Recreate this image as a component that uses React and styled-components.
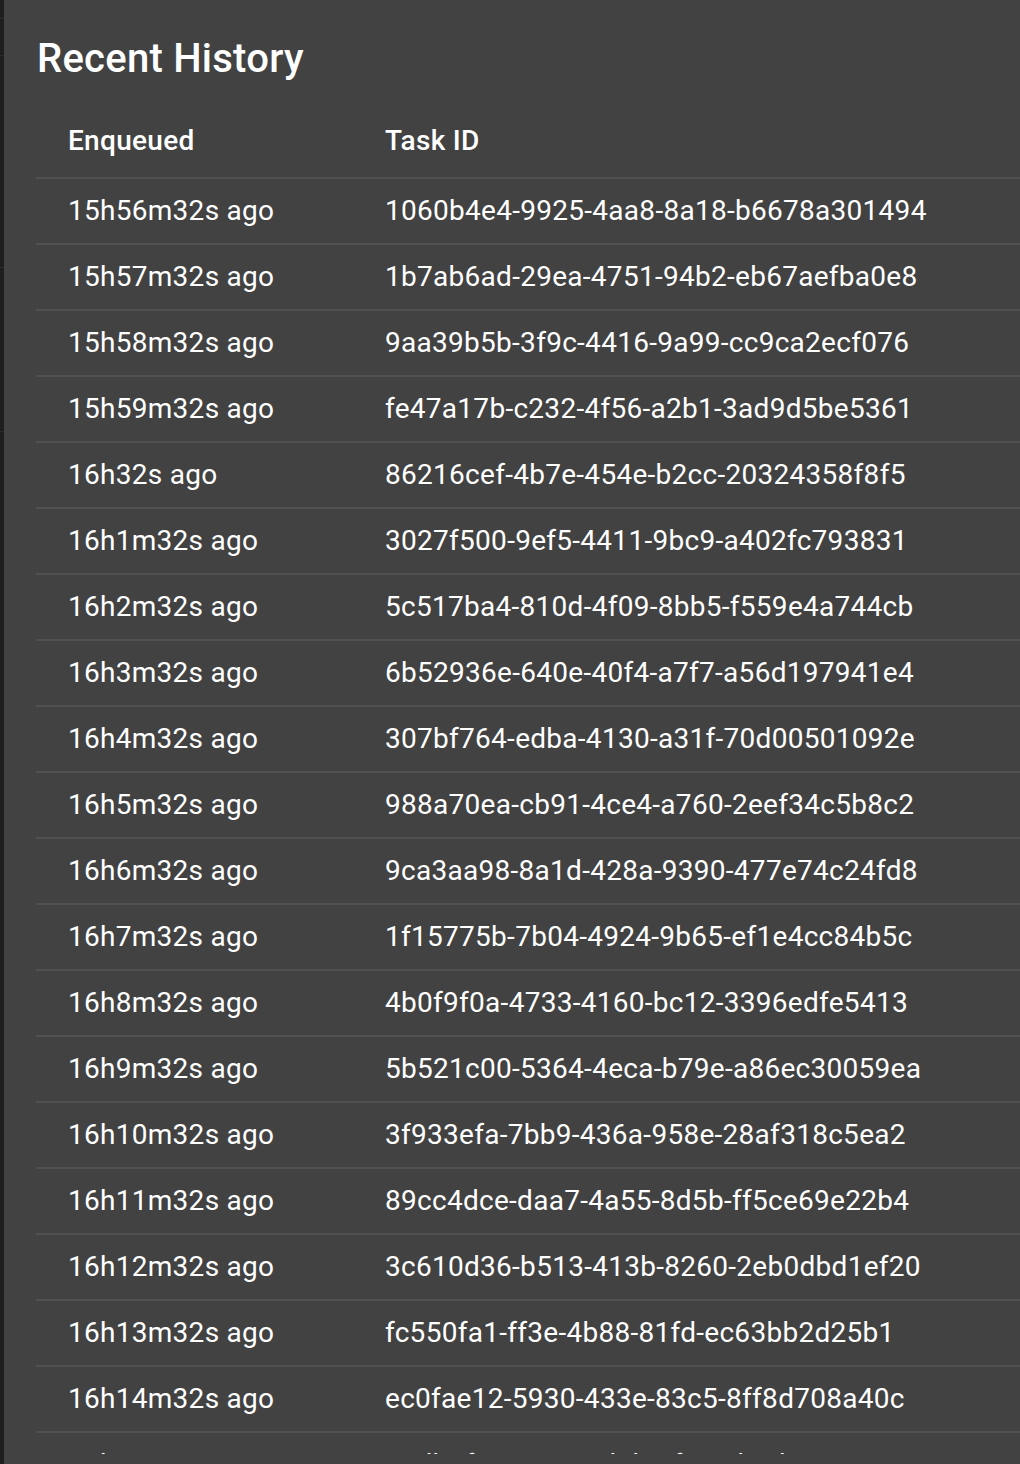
import React from 'react'
import styled, { createGlobalStyle } from 'styled-components'

const GlobalStyle = createGlobalStyle`
  html, body {
    margin: 0;
    padding: 0;
    height: 100%;
    overflow: hidden;
    background-color: #424242;
  }
  * {
    box-sizing: border-box;
  }
`

const Page = styled.div`
  display: flex;
  width: 1020px;
  height: 1464px;
  overflow: hidden;
  font-family: Roboto, 'Noto Sans', sans-serif;
  color: #ffffff;
`

const Rail = styled.div`
  flex: 0 0 4px;
  background-color: #1e1e1e;
  display: flex;
  flex-direction: column;
`

const RailBlock = styled.div`
  height: ${(p) => p.h}px;
  border-bottom: 1px solid #2c2c2c;
`

const Panel = styled.section`
  flex: 1;
  display: flex;
  flex-direction: column;
  background-color: #424242;
  padding: 27px 0 10px 32px;
  min-width: 0;
`

const Title = styled.h2`
  margin: 0 0 14px 1px;
  font-size: 40px;
  font-weight: 500;
  line-height: 64px;
  letter-spacing: 0.25px;
`

const TableWrap = styled.div`
  flex: 1;
  min-height: 0;
  overflow: hidden;
`

const Table = styled.table`
  width: 100%;
  border-collapse: collapse;
  table-layout: fixed;
`

const HeadCell = styled.th`
  text-align: left;
  font-size: 28px;
  font-weight: 500;
  line-height: 48px;
  letter-spacing: 0.3px;
  padding: 12px 32px;
  border-bottom: 2px solid #515151;
  width: ${(p) => (p.w ? `${p.w}px` : 'auto')};
`

const Cell = styled.td`
  font-size: 28px;
  font-weight: 400;
  line-height: 40px;
  letter-spacing: 0.28px;
  padding: 12px 32px;
  border-bottom: 2px solid #515151;
  white-space: nowrap;
`

const rows = [
  ['15h56m32s ago', '1060b4e4-9925-4aa8-8a18-b6678a301494'],
  ['15h57m32s ago', '1b7ab6ad-29ea-4751-94b2-eb67aefba0e8'],
  ['15h58m32s ago', '9aa39b5b-3f9c-4416-9a99-cc9ca2ecf076'],
  ['15h59m32s ago', 'fe47a17b-c232-4f56-a2b1-3ad9d5be5361'],
  ['16h32s ago', '86216cef-4b7e-454e-b2cc-20324358f8f5'],
  ['16h1m32s ago', '3027f500-9ef5-4411-9bc9-a402fc793831'],
  ['16h2m32s ago', '5c517ba4-810d-4f09-8bb5-f559e4a744cb'],
  ['16h3m32s ago', '6b52936e-640e-40f4-a7f7-a56d197941e4'],
  ['16h4m32s ago', '307bf764-edba-4130-a31f-70d00501092e'],
  ['16h5m32s ago', '988a70ea-cb91-4ce4-a760-2eef34c5b8c2'],
  ['16h6m32s ago', '9ca3aa98-8a1d-428a-9390-477e74c24fd8'],
  ['16h7m32s ago', '1f15775b-7b04-4924-9b65-ef1e4cc84b5c'],
  ['16h8m32s ago', '4b0f9f0a-4733-4160-bc12-3396edfe5413'],
  ['16h9m32s ago', '5b521c00-5364-4eca-b79e-a86ec30059ea'],
  ['16h10m32s ago', '3f933efa-7bb9-436a-958e-28af318c5ea2'],
  ['16h11m32s ago', '89cc4dce-daa7-4a55-8d5b-ff5ce69e22b4'],
  ['16h12m32s ago', '3c610d36-b513-413b-8260-2eb0dbd1ef20'],
  ['16h13m32s ago', 'fc550fa1-ff3e-4b88-81fd-ec63bb2d25b1'],
  ['16h14m32s ago', 'ec0fae12-5930-433e-83c5-8ff8d708a40c'],
  ['16h15m32s ago', 'a2db8f3e-1c4a-4d0b-9f1e-7b3d2c8e5a61'],
]

const App = () => {
  return (
    <Page>
      <GlobalStyle />
      <Rail>
        <RailBlock h={19} />
        <RailBlock h={37} />
        <RailBlock h={212} />
        <RailBlock h={164} />
      </Rail>
      <Panel>
        <Title>Recent History</Title>
        <TableWrap>
          <Table>
            <thead>
              <tr>
                <HeadCell w={317}>Enqueued</HeadCell>
                <HeadCell>Task ID</HeadCell>
              </tr>
            </thead>
            <tbody>
              {rows.map(([when, id]) => (
                <tr key={id}>
                  <Cell>{when}</Cell>
                  <Cell>{id}</Cell>
                </tr>
              ))}
            </tbody>
          </Table>
        </TableWrap>
      </Panel>
    </Page>
  )
}

export default App
